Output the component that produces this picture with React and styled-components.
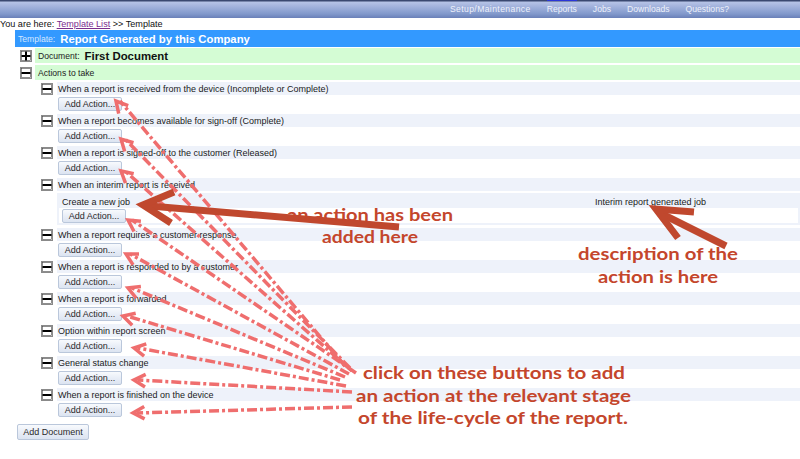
import React from "react";
import styled, { createGlobalStyle } from "styled-components";

const Global = createGlobalStyle`
  html, body { margin: 0; padding: 0; background: #fff; }
  body { font-family: "Liberation Sans", Arial, sans-serif; }
`;

const Page = styled.div`
  position: relative;
  width: 800px;
  height: 459px;
  overflow: hidden;
  background: #fff;
  color: #1a1a1a;
`;

const TopBar = styled.div`
  height: 18px;
  display: flex;
  justify-content: flex-end;
  align-items: stretch;
  gap: 16px;
  padding-right: 71px;
  background: linear-gradient(
    #3a4870 0px,
    #3a4870 1px,
    #b6c3e6 2px,
    #9cadd9 8px,
    #8198cb 14px,
    #6a80b8 18px
  );
`;

const NavItem = styled.span`
  display: flex;
  align-items: center;
  box-sizing: border-box;
  border-top: 1px solid ${(p) => (p.$active ? "#2a35d8" : "transparent")};
  padding-bottom: 1px;
  font-size: 8.6px;
  letter-spacing: ${(p) => p.$track || 0}px;
  color: #eef1fb;
`;

const Breadcrumb = styled.div`
  height: 12px;
  line-height: 12px;
  font-size: 9.1px;
  color: #111;
  white-space: nowrap;
`;

const Crumb = styled.a`
  color: #7a2d8e;
  text-decoration: underline;
`;

const Tree = styled.div`
  margin-left: 15px;
  display: flex;
  flex-direction: column;
`;

const TemplateBar = styled.div`
  height: 17px;
  background: #3399ff;
  display: flex;
  align-items: center;
  gap: 5px;
  padding-left: 3px;
`;

const SmallLabel = styled.span`
  font-size: 8.6px;
  color: ${(p) => (p.$light ? "#d3e6ff" : "#222")};
`;

const TemplateTitle = styled.span`
  font-size: 11.3px;
  font-weight: bold;
  color: #fff;
`;

const NodeRow = styled.div`
  display: grid;
  grid-template-columns: 20px 1fr;
  margin-top: ${(p) => p.$gap}px;
`;

const IconCell = styled.div`
  padding-left: ${(p) => p.$pad}px;
  display: flex;
  align-items: center;
`;

const GreenBody = styled.div`
  height: 15px;
  background: #d4fcd4;
  display: flex;
  align-items: center;
  gap: 5px;
  padding-left: 3px;
`;

const DocTitle = styled.span`
  font-size: 11.4px;
  font-weight: bold;
  color: #111;
`;

const Events = styled.div`
  display: flex;
  flex-direction: column;
  padding-left: 26px;
  margin-top: 2px;
`;

const EventBlock = styled.div`
  display: grid;
  grid-template-columns: 16px 1fr;
`;

const EventHeader = styled.div`
  height: 13px;
  background: #eef2fa;
  display: flex;
  align-items: center;
  padding-left: 1px;
  font-size: 9px;
  color: #1a1a1a;
  white-space: nowrap;
`;

const ButtonRow = styled.div`
  grid-column: 2;
  padding: 2px 0 3px 1px;
  display: flex;
`;

const Btn = styled.button`
  width: ${(p) => p.$w || 64}px;
  height: ${(p) => p.$h || 14}px;
  padding: 0;
  border: 1px solid #bac7db;
  border-radius: 2px;
  background: linear-gradient(#f8fafd, #e9eef7 50%, #dce4f1);
  font-family: "Liberation Sans", Arial, sans-serif;
  font-size: 9px;
  color: #2a2a2a;
  display: flex;
  align-items: center;
  justify-content: center;
`;

const ActionTable = styled.div`
  grid-column: 2;
  margin: 2px 0 3px 0;
  border: 2px solid #eef2fa;
  display: flex;
  flex-direction: column;
`;

const ActionLine = styled.div`
  display: grid;
  grid-template-columns: 536px 1fr;
  height: 13px;
  align-items: center;
  background: #eef2fa;
  font-size: 9px;
  color: #1a1a1a;
  white-space: nowrap;
`;

const ActionName = styled.span`
  padding-left: 3px;
`;

const ActionButtonRow = styled.div`
  padding: 1px 0 0 3px;
  display: flex;
  background: #fff;
`;

const DocButtonRow = styled.div`
  margin-top: 4px;
  padding-left: 2px;
  display: flex;
`;

const Overlay = styled.svg`
  position: absolute;
  left: 0;
  top: 0;
  width: 800px;
  height: 459px;
  pointer-events: none;
`;

const Toggle = ({ open }) => (
  <svg width="12" height="12" viewBox="0 0 12 12">
    <rect x="0.5" y="0.5" width="11" height="11" fill="#fff" stroke="#8a8a8a" />
    <rect x="1.5" y="1.5" width="9" height="9" fill="none" stroke="#444" strokeWidth="0.6" />
    <rect x="1.5" y="5" width="9" height="2" fill="#000" />
    {!open && <rect x="5" y="1.5" width="2" height="9" fill="#000" />}
  </svg>
);

const events = [
  { label: "When a report is received from the device (Incomplete or Complete)" },
  { label: "When a report becomes available for sign-off (Complete)" },
  { label: "When a report is signed-off to the customer (Released)" },
  {
    label: "When an interim report is received",
    actions: [{ name: "Create a new job", desc: "Interim report generated job" }],
  },
  { label: "When a report requires a customer response" },
  { label: "When a report is responded to by a customer" },
  { label: "When a report is forwarded" },
  { label: "Option within report screen" },
  { label: "General status change" },
  { label: "When a report is finished on the device" },
];

const dashed = [
  { from: [345, 366], to: [116, 101] },
  { from: [350, 368], to: [121, 139] },
  { from: [352, 371], to: [121, 171] },
  { from: [356, 373], to: [128, 220] },
  { from: [349, 374], to: [126, 254] },
  { from: [345, 377], to: [128, 288] },
  { from: [340, 380], to: [123, 316] },
  { from: [346, 386], to: [134, 348] },
  { from: [352, 392], to: [134, 380] },
  { from: [352, 407], to: [133, 413] },
];

const chevron = (from, to, len, spread) => {
  const dx = from[0] - to[0];
  const dy = from[1] - to[1];
  const a = Math.atan2(dy, dx);
  const p1 = [to[0] + len * Math.cos(a + spread), to[1] + len * Math.sin(a + spread)];
  const p2 = [to[0] + len * Math.cos(a - spread), to[1] + len * Math.sin(a - spread)];
  return `M${p1[0].toFixed(1)} ${p1[1].toFixed(1)} L${to[0]} ${to[1]} L${p2[0].toFixed(1)} ${p2[1].toFixed(1)}`;
};

const noteStyle = {
  fontFamily: "Lato, 'DejaVu Sans', sans-serif",
  fontWeight: 700,
  fontSize: 17,
  fill: "#c4462c",
};

const Note = ({ x, y, w, children }) => (
  <text x={x} y={y} textLength={w} lengthAdjust="spacingAndGlyphs" style={noteStyle}>
    {children}
  </text>
);

const Annotations = () => (
  <Overlay viewBox="0 0 800 459">
    <g stroke="#ef6e6e" strokeWidth="3.5" fill="none" strokeLinecap="butt">
      {dashed.map((d, i) => (
        <g key={i}>
          <line
            x1={d.from[0]}
            y1={d.from[1]}
            x2={d.to[0] + 4}
            y2={d.to[1]}
            strokeDasharray="10 3 3 3"
          />
          <path d={chevron(d.from, d.to, 13, 0.5)} strokeLinejoin="miter" />
        </g>
      ))}
    </g>
    <g stroke="#c0482e" fill="none" strokeLinecap="butt">
      <line x1="399" y1="227" x2="150" y2="206" strokeWidth="7" />
      <path d="M174 192 L143 205 L171 223" strokeWidth="7" strokeLinejoin="miter" />
      <line x1="726" y1="246" x2="662" y2="214" strokeWidth="7" />
      <path d="M694 212 L656 209 L678 238" strokeWidth="7" strokeLinejoin="miter" />
    </g>
    <Note x={287} y={221} w={166}>an action has been</Note>
    <Note x={322} y={243} w={96}>added here</Note>
    <Note x={578} y={260} w={160}>description of the</Note>
    <Note x={598} y={283} w={120}>action is here</Note>
    <Note x={363} y={379} w={262}>click on these buttons to add</Note>
    <Note x={356} y={402} w={275}>an action at the relevant stage</Note>
    <Note x={358} y={424} w={270}>of the life-cycle of the report.</Note>
  </Overlay>
);

export default function App() {
  return (
    <Page>
      <Global />
      <TopBar>
        <NavItem $track={0.4}>Setup/Maintenance</NavItem>
        <NavItem $active>Reports</NavItem>
        <NavItem>Jobs</NavItem>
        <NavItem>Downloads</NavItem>
        <NavItem>Questions?</NavItem>
      </TopBar>
      <Breadcrumb>
        You are here: <Crumb>Template List</Crumb> &gt;&gt; Template
      </Breadcrumb>
      <Tree>
        <TemplateBar>
          <SmallLabel $light>Template:</SmallLabel>
          <TemplateTitle>Report Generated by this Company</TemplateTitle>
        </TemplateBar>
        <NodeRow $gap={1}>
          <IconCell $pad={5}>
            <Toggle open={false} />
          </IconCell>
          <GreenBody>
            <SmallLabel>Document:</SmallLabel>
            <DocTitle>First Document</DocTitle>
          </GreenBody>
        </NodeRow>
        <NodeRow $gap={2}>
          <IconCell $pad={5}>
            <Toggle open />
          </IconCell>
          <GreenBody>
            <SmallLabel>Actions to take</SmallLabel>
          </GreenBody>
        </NodeRow>
        <Events>
          {events.map((ev) => (
            <EventBlock key={ev.label}>
              <IconCell $pad={0}>
                <Toggle open />
              </IconCell>
              <EventHeader>{ev.label}</EventHeader>
              {ev.actions ? (
                <ActionTable>
                  {ev.actions.map((a) => (
                    <ActionLine key={a.name}>
                      <ActionName>{a.name}</ActionName>
                      <span>{a.desc}</span>
                    </ActionLine>
                  ))}
                  <ActionButtonRow>
                    <Btn>Add Action...</Btn>
                  </ActionButtonRow>
                </ActionTable>
              ) : (
                <ButtonRow>
                  <Btn>Add Action...</Btn>
                </ButtonRow>
              )}
            </EventBlock>
          ))}
        </Events>
        <DocButtonRow>
          <Btn $w={72} $h={16}>Add Document</Btn>
        </DocButtonRow>
      </Tree>
      <Annotations />
    </Page>
  );
}
